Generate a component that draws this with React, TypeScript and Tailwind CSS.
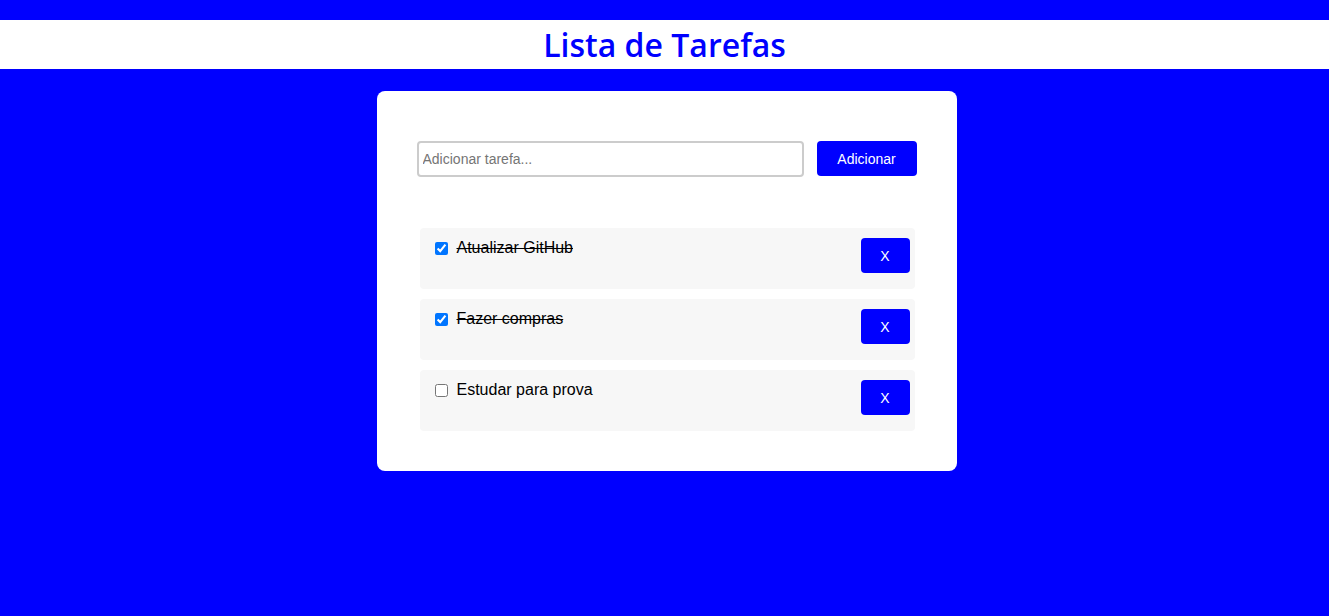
import { useState } from 'react';

interface Task {
  id: number;
  text: string;
  done: boolean;
}

const initialTasks: Task[] = [
  { id: 1, text: 'Atualizar GitHub', done: true },
  { id: 2, text: 'Fazer compras', done: true },
  { id: 3, text: 'Estudar para prova', done: false },
];

const App = () => {
  const [tasks, setTasks] = useState<Task[]>(initialTasks);
  const [newTask, setNewTask] = useState('');

  const addTask = () => {
    if (!newTask.trim()) return;
    setTasks([...tasks, { id: Date.now(), text: newTask.trim(), done: false }]);
    setNewTask('');
  };

  const toggleTask = (id: number) =>
    setTasks(tasks.map((t) => (t.id === id ? { ...t, done: !t.done } : t)));

  const removeTask = (id: number) => setTasks(tasks.filter((t) => t.id !== id));

  return (
    <div className="min-h-screen bg-[#0000ff] pt-5 font-['Liberation_Sans',Arial,sans-serif]">
      <header className="h-[49px] bg-white flex items-center justify-center">
        <h1 className="text-[32px] leading-none font-semibold text-[#0000ff] font-['Open_Sans',sans-serif]">
          Lista de Tarefas
        </h1>
      </header>

      <div className="flex justify-center pt-[22px] pl-1">
        <div className="w-[580px] bg-white rounded-lg px-10 pt-[50px] pb-10">
          <div className="flex items-start gap-[13px]">
            <input
              type="text"
              value={newTask}
              onChange={(e) => setNewTask(e.target.value)}
              placeholder="Adicionar tarefa..."
              className="w-[387px] h-9 border-2 border-[#cccccc] rounded px-1 text-sm text-black placeholder:text-[#757575] outline-none"
            />
            <button
              onClick={addTask}
              className="w-[100px] h-[35px] bg-[#0000ff] text-white text-sm rounded"
            >
              Adicionar
            </button>
          </div>

          <ul className="mt-[51px] ml-[3px] mr-[2px] flex flex-col gap-[10px]">
            {tasks.map((task) => (
              <li
                key={task.id}
                className="h-[61px] bg-[#f7f7f7] rounded flex items-start justify-between pl-[15px] pr-[5px] pt-[10px]"
              >
                <label className="flex items-center gap-[9px] text-base leading-5 text-black">
                  <input
                    type="checkbox"
                    checked={task.done}
                    onChange={() => toggleTask(task.id)}
                    className="w-[13px] h-[13px] m-0"
                  />
                  <span className={task.done ? 'line-through' : ''}>{task.text}</span>
                </label>
                <button
                  onClick={() => removeTask(task.id)}
                  className="w-[49px] h-[35px] bg-[#0000ff] text-white text-sm rounded"
                >
                  X
                </button>
              </li>
            ))}
          </ul>
        </div>
      </div>
    </div>
  );
};

export default App;
